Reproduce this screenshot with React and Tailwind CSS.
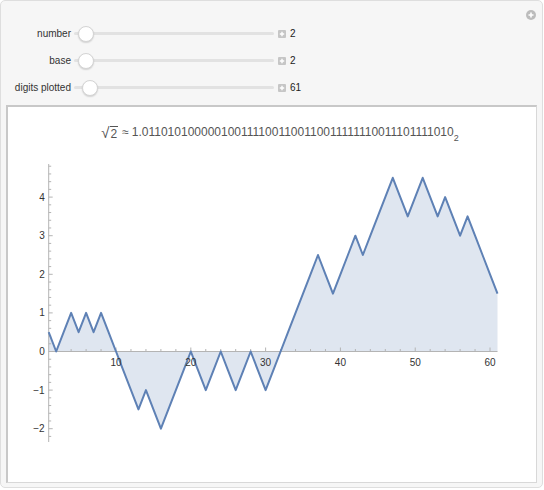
import React from "react";

const font = { fontFamily: '"Liberation Sans", Arial, sans-serif' };

const bits =
  "1" +
  "0110101000" +
  "0010011110" +
  "0110011001" +
  "1111110011" +
  "1011110011" +
  "0010010000";

const px = (k) => 40.7 + (k - 1) * 7.48;
const py = (v) => 210.5 - 38.6 * v;

const points = (() => {
  let y = 0;
  const out = [];
  for (let k = 1; k <= 61; k++) {
    y += bits[k - 1] === "1" ? 0.5 : -0.5;
    out.push([k, y]);
  }
  return out;
})();

const ControlRow = ({ label, value, thumb }) => {
  return (
    <div className="flex flex-row items-center h-[27px]">
      <p className="w-[70px] text-right text-[10px] text-[#333333]">{label}</p>
      <div className="relative ml-[3px] w-[200px] h-[16px] flex items-center">
        <div className="w-full h-[3px] rounded-full bg-[#e2e2e2]" />
        <div
          className={`absolute top-0 ${thumb} w-[16px] h-[16px] rounded-full bg-white border border-[#d4d4d4] shadow-[0_1px_1.5px_rgba(0,0,0,0.15)]`}
        />
      </div>
      <svg width="8" height="8" viewBox="0 0 8 8" className="ml-[4px]">
        <rect x="0" y="0" width="8" height="8" rx="1" fill="#c6c6c6" />
        <path d="M4 1.8V6.2M1.8 4H6.2" stroke="#ffffff" strokeWidth="1.4" />
      </svg>
      <p className="ml-[4px] text-[10px] text-[#222222]">{value}</p>
    </div>
  );
};

const Chart = () => {
  const line = points.map(([k, v]) => `${px(k)},${py(v)}`).join(" ");
  const area = `${px(1)},${py(0)} ${line} ${px(61)},${py(0)}`;

  const yTicks = [];
  for (let i = -11; i <= 24; i++) {
    const v = i / 5;
    const major = i % 5 === 0;
    yTicks.push(
      <line
        key={"y" + i}
        x1={px(1)}
        x2={px(1) + (major ? 4 : 2.5)}
        y1={py(v)}
        y2={py(v)}
        stroke="#b4b4b4"
        strokeWidth="1"
      />
    );
  }

  const xTicks = [];
  for (let k = 2; k <= 60; k += 2) {
    const major = k % 10 === 0;
    xTicks.push(
      <line
        key={"x" + k}
        x1={px(k)}
        x2={px(k)}
        y1={py(0)}
        y2={py(0) - (major ? 4 : 2.5)}
        stroke="#b4b4b4"
        strokeWidth="1"
      />
    );
  }

  return (
    <svg width="529" height="341" className="block" style={font}>
      <polygon points={area} fill="#dfe6f0" />
      <line x1={px(1)} x2={px(61)} y1={py(0)} y2={py(0)} stroke="#b4b4b4" strokeWidth="1" />
      <line x1={px(1)} x2={px(1)} y1="23" y2="301" stroke="#b4b4b4" strokeWidth="1" />
      {yTicks}
      {xTicks}
      <polyline
        points={line}
        fill="none"
        stroke="#5e81b5"
        strokeWidth="2"
        strokeLinejoin="round"
      />
      {[-2, -1, 0, 1, 2, 3, 4].map((v) => (
        <text
          key={v}
          x={px(1) - 4}
          y={py(v) + 3.5}
          textAnchor="end"
          fontSize="10"
          fill="#333333"
        >
          {v < 0 ? "\u2212" + Math.abs(v) : v}
        </text>
      ))}
      {[10, 20, 30, 40, 50, 60].map((k) => (
        <text
          key={k}
          x={px(k)}
          y={py(0) + 14}
          textAnchor="middle"
          fontSize="10"
          fill="#333333"
        >
          {k}
        </text>
      ))}
    </svg>
  );
};

const App = () => {
  return (
    <div className="w-[544px] h-[490px] bg-white" style={font}>
      <div className="relative w-[543px] h-[488px] rounded-[5px] border border-[#dedede] bg-[#f6f6f6] pt-[19px] pl-[5px]">
        <svg
          width="10"
          height="10"
          viewBox="0 0 10 10"
          className="absolute top-[9px] right-[6px]"
        >
          <circle cx="5" cy="5" r="5" fill="#bcbcbc" />
          <path d="M5 2.5V7.5M2.5 5H7.5" stroke="#ffffff" strokeWidth="1.6" />
        </svg>

        <div className="flex flex-col -ml-[5px]">
          <ControlRow label="number" value="2" thumb="left-[4px]" />
          <ControlRow label="base" value="2" thumb="left-[4px]" />
          <ControlRow label="digits plotted" value="61" thumb="left-[8px]" />
        </div>

        <div className="mt-[4px] w-[531px] h-[378px] bg-white border border-[#d8d8d8] border-l-2 border-t-2 border-l-[#c8c8c8] border-t-[#c8c8c8] flex flex-col">
          <div className="h-[34px] pt-[17px] pl-[16px] flex flex-row justify-center text-[12px] leading-[16px] text-[#555555]">
            <span className="flex flex-row items-end">
              <span className="text-[15px] leading-[16px]">√</span>
              <span className="border-t border-[#555555] leading-[14px] px-[1px]">2</span>
            </span>
            <span className="ml-[4px]">≈</span>
            <span className="ml-[3px]">
              1.0110101000001001111001100110011111110011101111010
              <sub className="text-[9px] align-[-3px]">2</sub>
            </span>
          </div>
          <Chart />
        </div>
      </div>
    </div>
  );
};

export default App;
